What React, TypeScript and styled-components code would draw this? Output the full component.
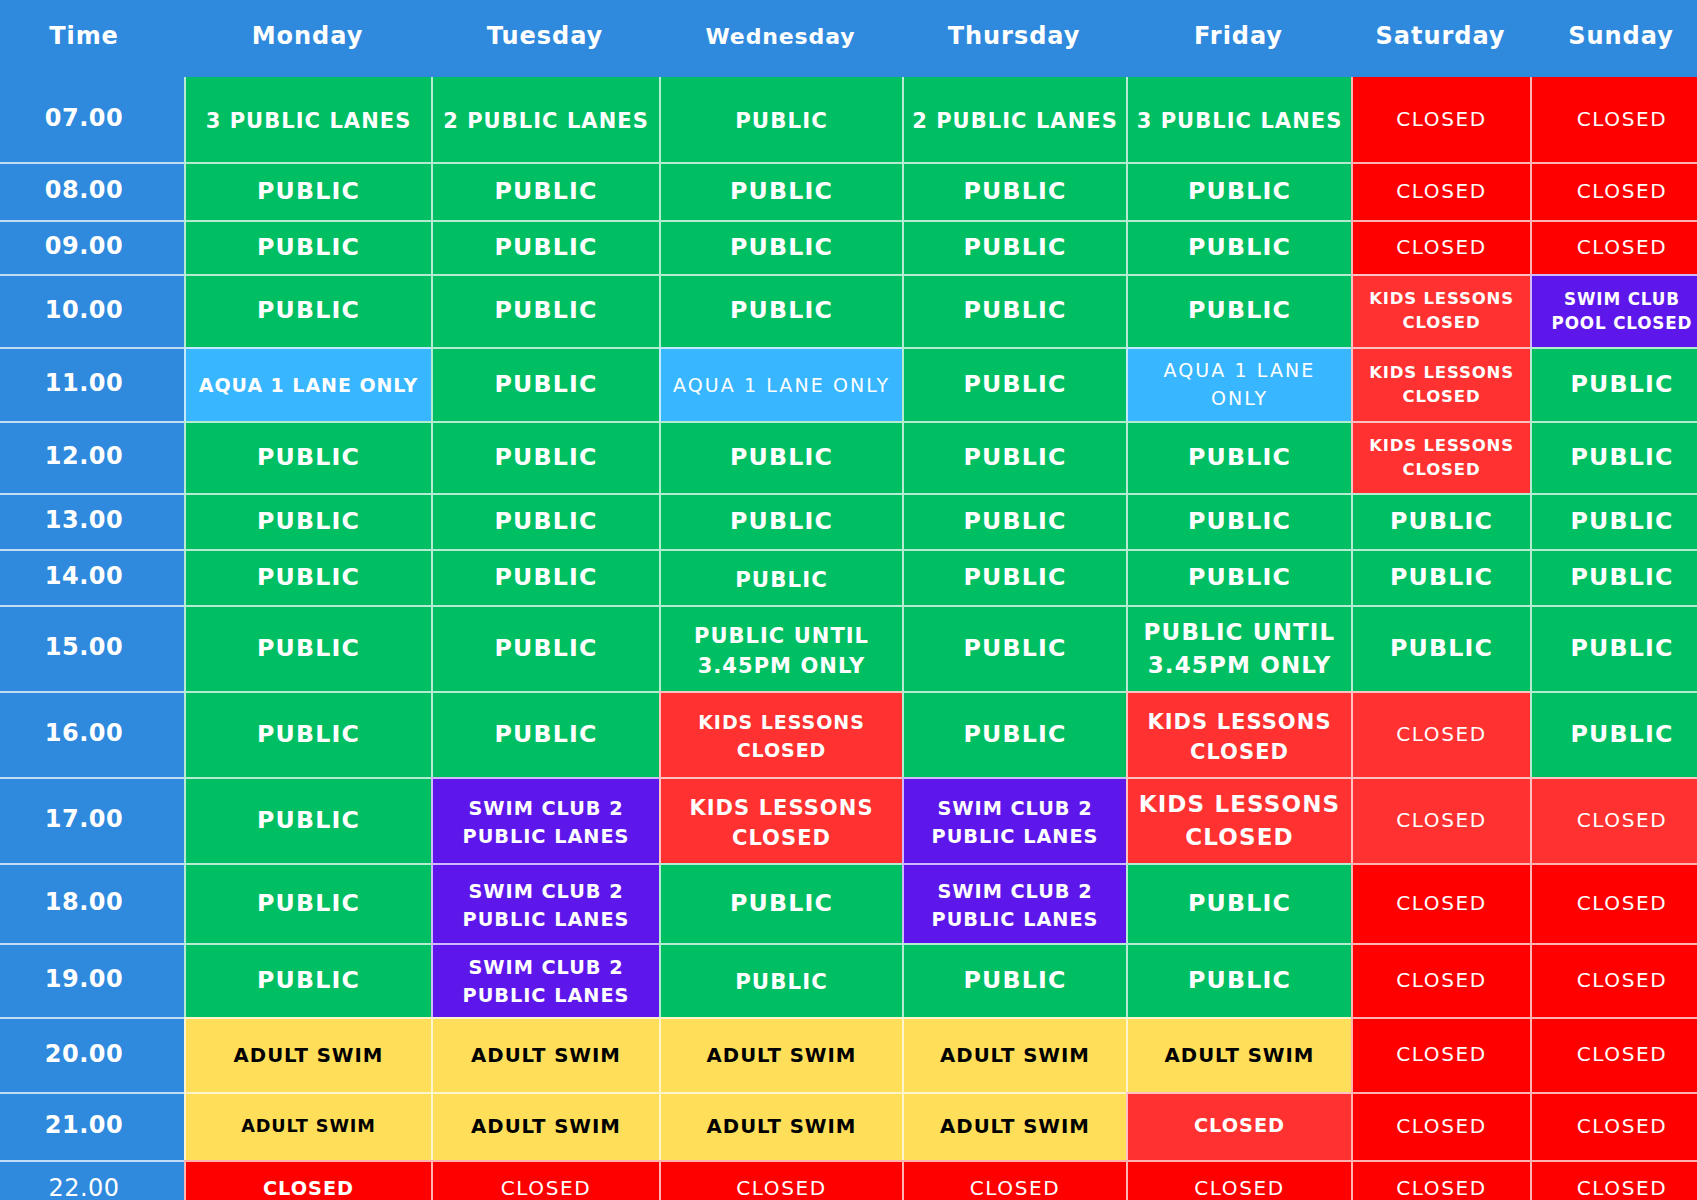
import React from "react";
import styled, { createGlobalStyle } from "styled-components";

const GlobalStyle = createGlobalStyle`
  html, body {
    margin: 0;
    padding: 0;
    overflow: hidden;
    background: #2f8ade;
  }
  * { box-sizing: border-box; }
`;

const COLS = "184px 247px 228px 243px 224px 225px 179px 182px";
const ROW_HEIGHTS = [85, 58, 54, 73, 74, 72, 56, 56, 86, 86, 86, 80, 74, 75, 68, 57];
const LINE = "rgba(255,255,255,0.7)";
const BLUE = "#2f8ade";

type Tone = "green" | "red" | "coral" | "purple" | "aqua" | "yellow";

const TONES: Record<Tone, { bg: string; fg: string }> = {
  green: { bg: "#00bf63", fg: "#ffffff" },
  red: { bg: "#ff0000", fg: "#ffffff" },
  coral: { bg: "#ff3131", fg: "#ffffff" },
  purple: { bg: "#5e17eb", fg: "#ffffff" },
  aqua: { bg: "#38b6ff", fg: "#ffffff" },
  yellow: { bg: "#ffde59", fg: "#000000" },
};

type Slot = {
  text: string;
  tone: Tone;
  size: number;
  regular?: boolean;
  spacing?: number;
  nudge?: number;
};

const P = (size = 23.7, nudge = 0): Slot => ({ text: "PUBLIC", tone: "green", size, nudge });
const CL = (tone: Tone = "red"): Slot => ({ text: "CLOSED", tone, size: 20, regular: true, spacing: 0.08 });
const CLB = (tone: Tone = "red"): Slot => ({ text: "CLOSED", tone, size: 19.3 });
const LANES = (n: number): Slot => ({ text: `${n} PUBLIC LANES`, tone: "green", size: 21, nudge: 6 });
const KIDS = (size: number, nudge = 5): Slot => ({ text: "KIDS LESSONS\nCLOSED", tone: "coral", size, nudge });
const SWIM2 = (nudge = 5): Slot => ({ text: "SWIM CLUB 2\nPUBLIC LANES", tone: "purple", size: 19.3, nudge });
const ADULT = (size = 19.7, nudge = 3): Slot => ({ text: "ADULT SWIM", tone: "yellow", size, nudge });
const UNTIL = (size: number, nudge: number): Slot => ({ text: "PUBLIC UNTIL\n3.45PM ONLY", tone: "green", size, nudge });

const DAYS = ["Monday", "Tuesday", "Wednesday", "Thursday", "Friday", "Saturday", "Sunday"];

const ROWS: { time: string; light?: boolean; slots: Slot[] }[] = [
  {
    time: "07.00",
    slots: [LANES(3), LANES(2), P(21.3, 6), LANES(2), LANES(3), { ...CL(), nudge: 2 }, { ...CL(), nudge: 2 }],
  },
  { time: "08.00", slots: [P(), P(), P(), P(), P(), CL(), CL()] },
  { time: "09.00", slots: [P(), P(), P(), P(), P(), CL(), CL()] },
  {
    time: "10.00",
    slots: [P(), P(), P(), P(), P(), KIDS(16.5, 1), { text: "SWIM CLUB\nPOOL CLOSED", tone: "purple", size: 16.8, nudge: 1 }],
  },
  {
    time: "11.00",
    slots: [
      { text: "AQUA 1 LANE ONLY", tone: "aqua", size: 19, nudge: 4 },
      P(),
      { text: "AQUA 1 LANE ONLY", tone: "aqua", size: 19, regular: true, spacing: 0.11, nudge: 3 },
      P(),
      { text: "AQUA 1 LANE\nONLY", tone: "aqua", size: 19, regular: true, spacing: 0.11, nudge: 2 },
      KIDS(16.5, 1),
      P(),
    ],
  },
  { time: "12.00", slots: [P(), P(), P(), P(), P(), KIDS(16.5, 1), P()] },
  { time: "13.00", slots: [P(), P(), P(), P(), P(), P(), P()] },
  { time: "14.00", slots: [P(), P(), P(21.3, 6), P(), P(), P(), P()] },
  { time: "15.00", slots: [P(), P(), UNTIL(21, 6), P(), UNTIL(23, 2), P(), P()] },
  { time: "16.00", slots: [P(), P(), KIDS(19, 5), P(), KIDS(21, 6), CL("coral"), P()] },
  { time: "17.00", slots: [P(), SWIM2(6), KIDS(21, 6), SWIM2(6), KIDS(23, 2), CL("coral"), CL("coral")] },
  { time: "18.00", slots: [P(), SWIM2(5), P(), SWIM2(5), P(), CL(), CL()] },
  { time: "19.00", slots: [P(), SWIM2(4), P(21.3, 4), P(), P(), CL(), CL()] },
  { time: "20.00", slots: [ADULT(), ADULT(), ADULT(), ADULT(), ADULT(), CL(), CL()] },
  { time: "21.00", slots: [ADULT(17.7, 2), ADULT(19.7, 2), ADULT(19.7, 2), ADULT(19.7, 2), CLB("coral"), CL(), CL()] },
  { time: "22.00", light: true, slots: [CLB(), CL(), CL(), CL(), CL(), CL(), CL()] },
];

const Page = styled.div`
  width: 1697px;
  height: 1200px;
  overflow: hidden;
  background: ${BLUE};
  font-family: "DejaVu Sans", "Liberation Sans", sans-serif;
`;

const Header = styled.div`
  display: grid;
  grid-template-columns: ${COLS};
  width: 1712px;
  height: 77px;
  background: ${BLUE};
`;

const HeadCell = styled.div<{ $size: number; $time?: boolean }>`
  display: flex;
  align-items: center;
  justify-content: center;
  padding-bottom: 5px;
  padding-right: ${(p) => (p.$time ? 16 : 0)}px;
  color: #ffffff;
  font-weight: 700;
  font-size: ${(p) => p.$size}px;
  letter-spacing: 0.04em;
`;

const Grid = styled.div`
  display: grid;
  grid-template-columns: ${COLS};
  grid-template-rows: ${ROW_HEIGHTS.map((h) => `${h}px`).join(" ")};
  width: 1712px;
`;

const TimeCell = styled.div<{ $first: boolean; $light?: boolean }>`
  display: flex;
  align-items: center;
  justify-content: center;
  padding: 0 16px 4px 0;
  background: ${BLUE};
  color: #ffffff;
  border-top: ${(p) => (p.$first ? "none" : `2px solid ${LINE}`)};
  font-size: 24px;
  font-weight: ${(p) => (p.$light ? 400 : 700)};
  letter-spacing: 0.02em;
`;

const SlotCell = styled.div<{ $tone: Tone; $first: boolean }>`
  display: flex;
  align-items: center;
  justify-content: center;
  text-align: center;
  padding: 0 2px 2px;
  background: ${(p) => TONES[p.$tone].bg};
  color: ${(p) => TONES[p.$tone].fg};
  border-left: 2px solid ${LINE};
  border-top: ${(p) => (p.$first ? "none" : `2px solid ${LINE}`)};
`;

const SlotText = styled.span<{ $size: number; $regular?: boolean; $spacing: number; $nudge: number }>`
  display: block;
  margin-top: ${(p) => p.$nudge}px;
  font-size: ${(p) => p.$size}px;
  font-weight: ${(p) => (p.$regular ? 400 : 700)};
  letter-spacing: ${(p) => p.$spacing}em;
  line-height: 1.45;
  white-space: pre;
`;

export default function App() {
  return (
    <Page>
      <GlobalStyle />
      <Header>
        <HeadCell $size={24} $time>
          Time
        </HeadCell>
        {DAYS.map((d) => (
          <HeadCell key={d} $size={d === "Wednesday" ? 22 : 24}>
            {d}
          </HeadCell>
        ))}
      </Header>
      <Grid>
        {ROWS.map((row, ri) => (
          <React.Fragment key={row.time}>
            <TimeCell $first={ri === 0} $light={row.light}>
              {row.time}
            </TimeCell>
            {row.slots.map((s, ci) => (
              <SlotCell key={ci} $tone={s.tone} $first={ri === 0}>
                <SlotText
                  $size={s.size}
                  $regular={s.regular}
                  $spacing={s.spacing ?? 0.05}
                  $nudge={s.nudge ?? 0}
                >
                  {s.text}
                </SlotText>
              </SlotCell>
            ))}
          </React.Fragment>
        ))}
      </Grid>
    </Page>
  );
}
